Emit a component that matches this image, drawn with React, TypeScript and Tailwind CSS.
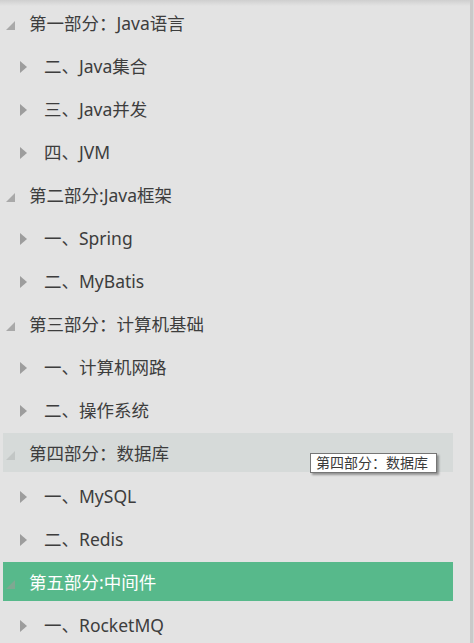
import React from "react";

type Node = {
  label: string;
  level: 0 | 1;
  state?: "hover" | "active";
};

const nodes: Node[] = [
  { label: "第一部分：Java语言", level: 0 },
  { label: "二、Java集合", level: 1 },
  { label: "三、Java并发", level: 1 },
  { label: "四、JVM", level: 1 },
  { label: "第二部分:Java框架", level: 0 },
  { label: "一、Spring", level: 1 },
  { label: "二、MyBatis", level: 1 },
  { label: "第三部分：计算机基础", level: 0 },
  { label: "一、计算机网路", level: 1 },
  { label: "二、操作系统", level: 1 },
  { label: "第四部分：数据库", level: 0, state: "hover" },
  { label: "一、MySQL", level: 1 },
  { label: "二、Redis", level: 1 },
  { label: "第五部分:中间件", level: 0, state: "active" },
  { label: "一、RocketMQ", level: 1 },
];

// small corner triangle of an open branch
const Expanded = ({ color }: { color: string }) => (
  <svg width="9" height="9" viewBox="0 0 9 9" className="shrink-0">
    <polygon points="9,0 9,9 0,9" fill={color} />
  </svg>
);

// right-pointing triangle of a closed branch
const Collapsed = () => (
  <svg width="7" height="12" viewBox="0 0 7 12" className="shrink-0">
    <polygon points="0,0 7,6 0,12" fill="#9d9d9d" />
  </svg>
);

const Row = ({ node }: { node: Node }) => {
  const bg =
    node.state === "active"
      ? "bg-[#57b98b] text-white"
      : node.state === "hover"
      ? "bg-[#d6dad9] text-[#3d3d3d]"
      : "text-[#3d3d3d]";

  const arrowColor =
    node.state === "active" ? "#7fa892" : node.state === "hover" ? "#c2c6c5" : "#a9a9a9";

  return (
    <div className={`ml-[3px] w-[450px] h-[39px] shrink-0 flex items-center ${bg}`}>
      {node.level === 0 ? (
        <div className="w-[26px] pl-[3px] pt-[6px] flex">
          <Expanded color={arrowColor} />
        </div>
      ) : (
        <div className="w-[41px] pl-[17px] pt-[2px] flex">
          <Collapsed />
        </div>
      )}
      <span className="text-[17.5px] pt-[2px] leading-none whitespace-nowrap">{node.label}</span>
    </div>
  );
};

export default function App() {
  return (
    <div
      className="relative w-[474px] h-[643px] overflow-hidden bg-[#e3e3e3] flex"
      style={{ fontFamily: '"Noto Sans", "Noto Sans CJK SC", sans-serif' }}
    >
      <div className="flex-1 flex flex-col gap-[4px] pt-[3px]">
        {nodes.map((n, i) => (
          <Row key={i} node={n} />
        ))}
      </div>
      <div className="w-[3px] bg-[#c9c9c9]" />
      <div className="w-[1px] bg-[#dadada]" />

      {/* top edge shadow */}
      <div className="absolute left-0 top-0 w-[470px] h-[6px] bg-gradient-to-b from-[#cfcfcf] to-transparent pointer-events-none" />

      {/* tooltip */}
      <div className="absolute left-[310px] top-[453px] w-[127px] h-[20px] bg-white border border-[#767676] shadow-[2px_2px_2px_rgba(0,0,0,0.35)] flex items-center pl-[5px]">
        <span className="text-[14px] leading-none text-[#3a3a3a] whitespace-nowrap">第四部分：数据库</span>
      </div>
    </div>
  );
}
